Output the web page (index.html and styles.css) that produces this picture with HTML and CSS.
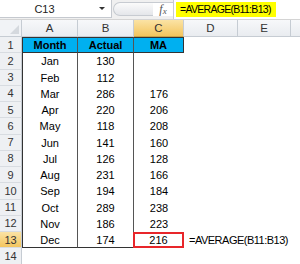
FILE: index.html
```html
<!DOCTYPE html>
<html>
<head>
<meta charset="utf-8">
<link rel="stylesheet" href="styles.css">
</head>
<body>
<div class="topbar">
  <div class="namebox"><span class="name">C13</span><span class="arrow"></span></div>
  <div class="grip"></div>
  <div class="fx"><i>f</i><span class="x">x</span></div>
  <div class="formula"><span class="hl">=AVERAGE(B11:B13)</span></div>
</div>
<div class="sheet">
  <div class="corner"><span class="tri"></span></div>
  <div class="colh">A</div>
  <div class="colh">B</div>
  <div class="colh sel">C</div>
  <div class="colh">D</div>
  <div class="colh">E</div>
  <div class="colh last"></div>

  <div class="rowh">1</div>
  <div class="c a hd">Month</div>
  <div class="c b hd">Actual</div>
  <div class="c m hd mh">MA</div>
  <div class="c"></div><div class="c"></div><div class="c"></div>

  <div class="rowh">2</div><div class="c a">Jan</div><div class="c b">130</div><div class="c m"></div><div class="c"></div><div class="c"></div><div class="c"></div>
  <div class="rowh">3</div><div class="c a">Feb</div><div class="c b">112</div><div class="c m"></div><div class="c"></div><div class="c"></div><div class="c"></div>
  <div class="rowh">4</div><div class="c a">Mar</div><div class="c b">286</div><div class="c m">176</div><div class="c"></div><div class="c"></div><div class="c"></div>
  <div class="rowh">5</div><div class="c a">Apr</div><div class="c b">220</div><div class="c m">206</div><div class="c"></div><div class="c"></div><div class="c"></div>
  <div class="rowh">6</div><div class="c a">May</div><div class="c b">118</div><div class="c m">208</div><div class="c"></div><div class="c"></div><div class="c"></div>
  <div class="rowh">7</div><div class="c a">Jun</div><div class="c b">141</div><div class="c m">160</div><div class="c"></div><div class="c"></div><div class="c"></div>
  <div class="rowh">8</div><div class="c a">Jul</div><div class="c b">126</div><div class="c m">128</div><div class="c"></div><div class="c"></div><div class="c"></div>
  <div class="rowh">9</div><div class="c a">Aug</div><div class="c b">231</div><div class="c m">166</div><div class="c"></div><div class="c"></div><div class="c"></div>
  <div class="rowh">10</div><div class="c a">Sep</div><div class="c b">194</div><div class="c m">184</div><div class="c"></div><div class="c"></div><div class="c"></div>
  <div class="rowh">11</div><div class="c a">Oct</div><div class="c b">289</div><div class="c m">238</div><div class="c"></div><div class="c"></div><div class="c"></div>
  <div class="rowh">12</div><div class="c a">Nov</div><div class="c b">186</div><div class="c m">223</div><div class="c"></div><div class="c"></div><div class="c"></div>
  <div class="rowh sel">13</div><div class="c a end">Dec</div><div class="c b end">174</div><div class="c m active">216</div><div class="c d13"><span class="txt">=AVERAGE(B11:B13)</span></div><div class="c"></div><div class="c"></div>
  <div class="rowh">14</div><div class="c"></div><div class="c"></div><div class="c"></div><div class="c"></div><div class="c"></div><div class="c"></div>
</div>
</body>
</html>
```
FILE: styles.css
```css
html, body {
  margin: 0;
  padding: 0;
  background: #ffffff;
  width: 300px;
  height: 264px;
  overflow: hidden;
  font-family: "Liberation Sans", Arial, sans-serif;
  color: #000;
}

.topbar {
  height: 20px;
  display: flex;
  align-items: stretch;
  background: #f0f0f0;
  border-bottom: 1px solid #d4d4d4;
  box-sizing: border-box;
}

.namebox {
  width: 112px;
  height: 18px;
  background: #fff;
  border: 1px solid #c5c9cf;
  border-left: none;
  border-top: none;
  box-sizing: border-box;
  display: flex;
  align-items: center;
  position: relative;
}

.name {
  flex: 1;
  text-align: center;
  font-size: 11px;
  padding-right: 10px;
  color: #222;
}

.arrow {
  width: 0;
  height: 0;
  border-left: 3px solid transparent;
  border-right: 3px solid transparent;
  border-top: 3px solid #333;
  margin-right: 6px;
}

.grip {
  width: 40px;
  height: 14px;
  margin: 2px 0 0 1px;
  border-radius: 8px 0 0 8px;
  background: linear-gradient(#fbfbfb, #e4e6ea);
  border: 1px solid #c7cbd1;
  border-right: none;
  box-sizing: border-box;
}

.fx {
  width: 20px;
  display: flex;
  align-items: center;
  justify-content: center;
  font-family: "Liberation Serif", serif;
  font-size: 12px;
  color: #555;
  background: #fff;
  border-top: 1px solid #c7cbd1;
  margin-top: 2px;
  height: 14px;
  box-sizing: border-box;
}

.fx i { font-style: italic; }
.fx .x { font-style: italic; font-size: 9px; margin-top: 3px; }

.formula {
  flex: 1;
  background: #fff;
  border-left: 1px solid #c7cbd1;
  display: flex;
  align-items: center;
  padding-left: 2px;
}

.hl {
  background: #ffff00;
  font-size: 10.5px;
  letter-spacing: -0.7px;
  padding: 2px 5px 2px 4px;
  line-height: 11px;
}

.sheet {
  display: grid;
  grid-template-columns: 22px 56px 56px 50px 54px 53px 9px;
  grid-template-rows: 17px repeat(14, 16.25px);
  font-size: 11px;
}

.corner {
  background: #f1f3f6;
  border-right: 1px solid #c6ccd3;
  border-bottom: 1px solid #c6ccd3;
  position: relative;
}

.tri {
  position: absolute;
  right: 2px;
  bottom: 2px;
  width: 0;
  height: 0;
  border-left: 9px solid transparent;
  border-bottom: 9px solid #d5d9de;
}

.colh {
  background: linear-gradient(#f7f8fa, #e9ecf0);
  border-right: 1px solid #c6ccd3;
  border-bottom: 1px solid #c6ccd3;
  display: flex;
  align-items: center;
  justify-content: center;
  color: #333;
  font-size: 11.5px;
}

.colh.sel {
  background: linear-gradient(#fbe3a5, #f3c55e);
  border-bottom-color: #c9a247;
}

.colh.last { border-right: none; }

.rowh {
  background: #eef0f3;
  border-right: 1px solid #c6ccd3;
  border-bottom: 1px solid #d8dce1;
  display: flex;
  align-items: center;
  justify-content: center;
  color: #333;
  font-size: 11px;
}

.rowh.sel {
  background: linear-gradient(#fbe3a5, #f3c55e);
}

.c {
  display: flex;
  align-items: center;
  justify-content: center;
  white-space: nowrap;
  position: relative;
}

.a {
  border-left: 1px solid #333;
  border-right: 1px solid #555;
}

.b {
  border-right: 1px solid #555;
}

.hd {
  background: #00b0f0;
  font-weight: bold;
  border-top: 1px solid #333;
  border-bottom: 1px solid #333;
}

.mh {
  border-right: 1px solid #333;
}

.end {
  border-bottom: 1px solid #333;
}

.active {
  border: 2px solid #e8262a;
  margin-left: -1px;
}

.d13 {
  justify-content: flex-start;
  overflow: visible;
}

.txt {
  position: absolute;
  left: 5px;
  letter-spacing: -0.5px;
}
```
